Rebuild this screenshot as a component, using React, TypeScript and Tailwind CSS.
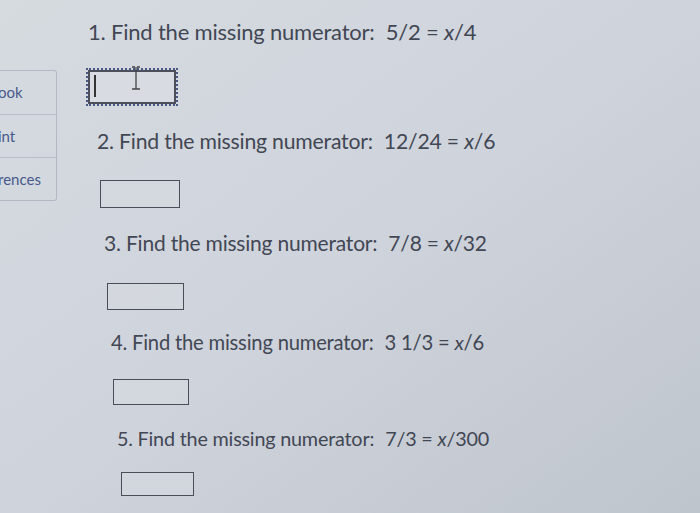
import React from 'react';

const questions = [
  { n: 1, a: '5/2 = ', b: '/4', ml: 'ml-[88px]', top: 'mt-[17px]', box: '', size: 'text-[22px]' },
  { n: 2, a: '12/24 = ', b: '/6', ml: 'ml-[97px]', top: 'mt-[21px]', box: 'ml-[100px] mt-[25px] w-[80px] h-[28px]', size: 'text-[21.2px]' },
  { n: 3, a: '7/8 = ', b: '/32', ml: 'ml-[104px]', top: 'mt-[21px]', box: 'ml-[107px] mt-[26px] w-[77px] h-[27px]', size: 'text-[21px]' },
  { n: 4, a: '3 1/3 = ', b: '/6', ml: 'ml-[111px]', top: 'mt-[18px]', box: 'ml-[113px] mt-[23px] w-[76px] h-[26px]', size: 'text-[20.2px]' },
  { n: 5, a: '7/3 = ', b: '/300', ml: 'ml-[117px]', top: 'mt-[19px]', box: 'ml-[121px] mt-[20px] w-[73px] h-[24px]', size: 'text-[19.8px]' },
];

function Sidebar() {
  const items = ['ook', 'int', 'rences'];
  return (
    <div className="absolute left-0 top-[70px] w-[57px] rounded-r-[3px] border border-l-0 border-[#b3b8c4] bg-[#d3d8df]/60">
      {items.map((t, i) => (
        <div
          key={t}
          className={`h-[43px] flex items-center text-[15px] text-[#47598a] -ml-[2px] ${i > 0 ? 'border-t border-[#b9bec8]' : ''}`}
        >
          {t}
        </div>
      ))}
    </div>
  );
}

export default function App() {
  return (
    <div
      className="relative w-[700px] h-[513px] overflow-hidden bg-linear-to-br from-[#d6dbe0] via-[#cfd3dc] to-[#bfc5cd] text-[#424754]"
      style={{ fontFamily: 'Lato, "Open Sans", sans-serif' }}
    >
      <Sidebar />
      <div className="flex flex-col pt-px">
        {questions.map((item, i) => (
          <div key={item.n} className="flex flex-col">
            <div className={`${item.ml} ${item.top} ${item.size} leading-[28px] whitespace-nowrap tracking-[-0.2px]`}>
              {item.n}. Find the missing numerator:
              <span className="ml-[11px]">
                {item.a}
                <span className="italic">x</span>
                {item.b}
              </span>
            </div>
            {i === 0 ? (
              <div className="ml-[86px] mt-[22px] w-[92px] h-[38px] p-[2px] outline-2 outline-dotted outline-[#4a5a84] -outline-offset-2">
                <div className="relative w-full h-full border-2 border-[#4b4f5a] bg-[#d8dce2]">
                  <div className="absolute left-[4px] top-[3px] w-[1.5px] h-[22px] bg-[#333]" />
                  <svg className="absolute left-[40px] -top-[6px]" width="12" height="26" viewBox="0 0 12 26">
                    <path d="M2 1h3M7 1h3M6 1v22M2 23h8" stroke="#444" strokeWidth="1.3" fill="none" />
                  </svg>
                </div>
              </div>
            ) : (
              <div className={`${item.box} border-[1.5px] border-[#4a4e58] bg-[#d6dae0]/60`} />
            )}
          </div>
        ))}
      </div>
    </div>
  );
}
